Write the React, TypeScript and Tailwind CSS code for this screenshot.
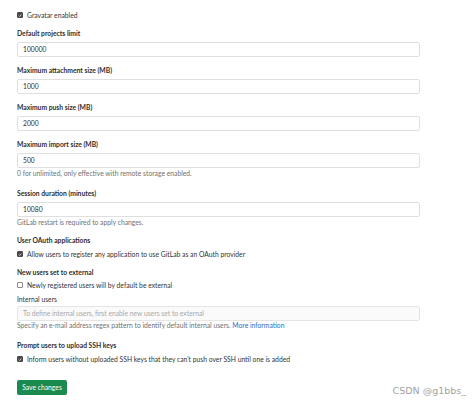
import { ReactNode } from "react";

const font = { fontFamily: "Lato, 'Liberation Sans', sans-serif" };

function Check({ checked }: { checked?: boolean }) {
  return (
    <span
      className={`inline-flex h-[6px] w-[6px] shrink-0 items-center justify-center rounded-[1px] border ${
        checked ? "border-[#4a4a4a] bg-[#4a4a4a]" : "border-[#8a8a8a] bg-white"
      }`}
    >
      {checked && (
        <svg viewBox="0 0 8 8" className="h-[5px] w-[5px]">
          <path d="M1.5 4.2 L3.3 6 L6.6 2" fill="none" stroke="white" strokeWidth="1.4" />
        </svg>
      )}
    </span>
  );
}

function CheckRow({ checked, children, className = "" }: { checked?: boolean; children: ReactNode; className?: string }) {
  return (
    <div className={`flex h-[12px] items-center gap-[4px] text-[#333333] ${className}`}>
      <Check checked={checked} />
      <span>{children}</span>
    </div>
  );
}

function Label({ children, className = "" }: { children: ReactNode; className?: string }) {
  return <div className={`h-[12px] leading-[12px] font-bold text-[#2e2e2e] ${className}`}>{children}</div>;
}

function Field({ value, className = "" }: { value: string; className?: string }) {
  return (
    <div className={`flex h-[15px] w-[403px] items-center rounded-[2px] border border-[#dfdfdf] bg-white px-[5px] text-[#333333] ${className}`}>
      {value}
    </div>
  );
}

function Help({ children, className = "" }: { children: ReactNode; className?: string }) {
  return <div className={`h-[9px] leading-[9px] text-[#707070] ${className}`}>{children}</div>;
}

export default function App() {
  return (
    <div className="relative h-[403px] w-[474px] overflow-hidden bg-white text-[6.75px]" style={font}>
      <div className="flex flex-col pl-[17px] pt-[9px]">
        <CheckRow checked>Gravatar enabled</CheckRow>

        <Label className="mt-[6px]">Default projects limit</Label>
        <Field value="100000" className="mt-[3px]" />

        <Label className="mt-[7px]">Maximum attachment size (MB)</Label>
        <Field value="1000" className="mt-[3px]" />

        <Label className="mt-[7px]">Maximum push size (MB)</Label>
        <Field value="2000" className="mt-[3px]" />

        <Label className="mt-[7px]">Maximum import size (MB)</Label>
        <Field value="500" className="mt-[3px]" />
        <Help className="mt-[1px]">0 for unlimited, only effective with remote storage enabled.</Help>

        <Label className="mt-[9px]">Session duration (minutes)</Label>
        <Field value="10080" className="mt-[3px]" />
        <Help className="mt-[1px]">GitLab restart is required to apply changes.</Help>

        <Label className="mt-[7px]">User OAuth applications</Label>
        <CheckRow checked className="mt-[2px]">
          Allow users to register any application to use GitLab as an OAuth provider
        </CheckRow>

        <Label className="mt-[6px]">New users set to external</Label>
        <CheckRow className="mt-[1px]">Newly registered users will by default be external</CheckRow>

        <div className="mt-[2px] h-[12px] leading-[12px] text-[#333333]">Internal users</div>
        <div className="mt-[1px] flex h-[15px] w-[403px] items-center rounded-[2px] border border-[#e5e5e5] bg-[#fafafa] px-[5px] text-[#a8a8a8]">
          To define internal users, first enable new users set to external
        </div>
        <Help>
          Specify an e-mail address regex pattern to identify default internal users.{" "}
          <span className="text-[#1f6fc5]">More information</span>
        </Help>

        <Label className="mt-[9px]">Prompt users to upload SSH keys</Label>
        <CheckRow checked className="mt-[2px]">
          Inform users without uploaded SSH keys that they can't push over SSH until one is added
        </CheckRow>

        <button className="mt-[15px] flex h-[15px] w-[50px] items-center justify-center rounded-[2px] bg-[#1b8a4e] text-white">
          Save changes
        </button>
      </div>

      <div
        className="absolute bottom-[5px] right-[8px] text-[9.5px] text-[#a3a3a3]"
        style={{ fontFamily: "'DejaVu Sans', sans-serif" }}
      >
        CSDN @g1bbs_
      </div>
    </div>
  );
}
